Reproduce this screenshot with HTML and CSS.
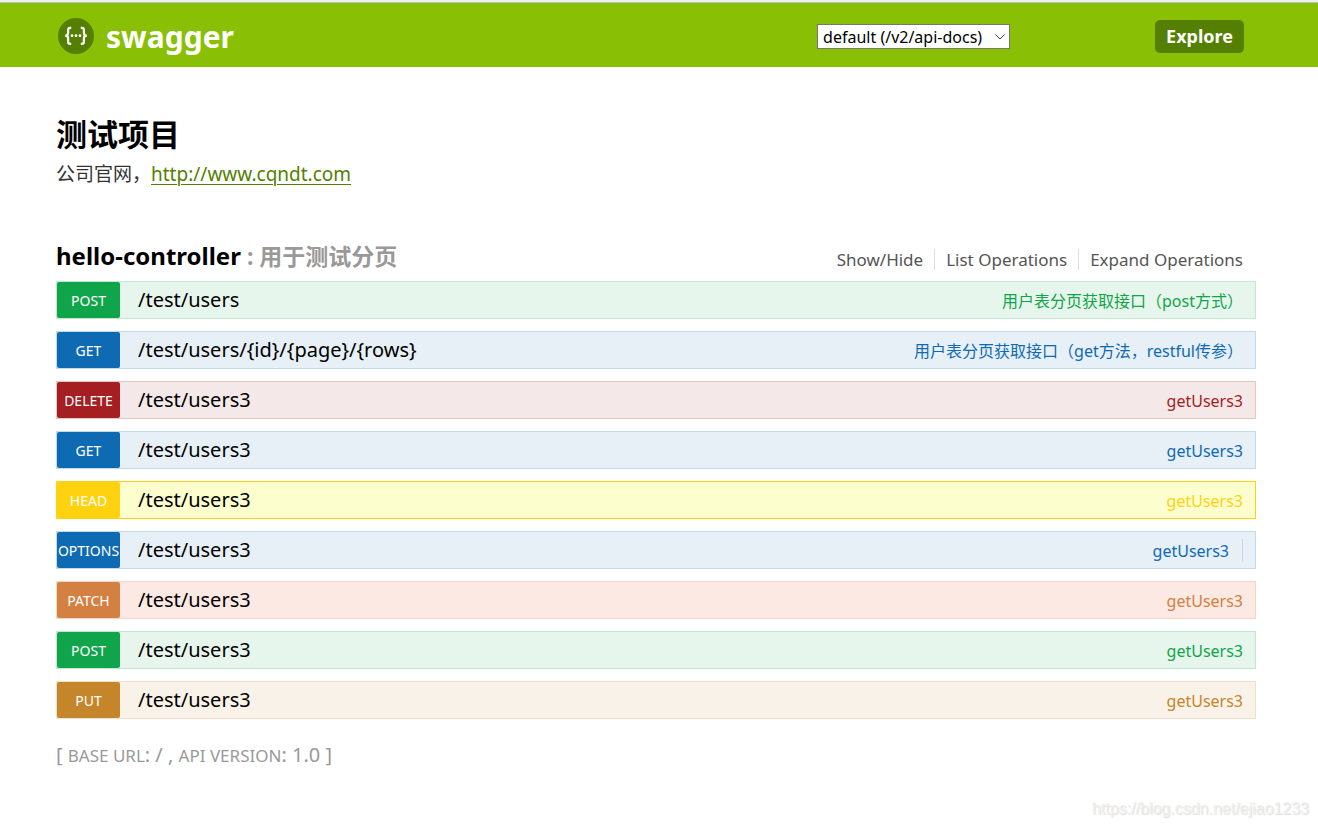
FILE: index.html
```html
<!DOCTYPE html>
<html lang="zh-CN">
<head>
    <meta charset="UTF-8">
    <meta name="viewport" content="width=device-width, initial-scale=1.0">
    <title>Swagger UI</title>
    <link rel="stylesheet" href="styles.css">
</head>
<body>

    <header class="header">
        <a class="logo" href="#">
            <svg class="logo-icon" viewBox="0 0 36 36" width="36" height="36" aria-hidden="true">
                <circle cx="18" cy="18" r="18" fill="#547f00"/>
                <g fill="none" stroke="#fff" stroke-width="2.2">
                    <path d="M13.2 9.8h-1q-2.1 0-2.1 2.1v3.2q0 2.6-2.9 2.6q2.9 0 2.9 2.6v3.4q0 2.1 2.1 2.1h1"/>
                    <path d="M22.8 9.8h1q2.1 0 2.1 2.1v3.2q0 2.6 2.9 2.6q-2.9 0-2.9 2.6v3.4q0 2.1-2.1 2.1h-1"/>
                </g>
                <g fill="#fff">
                    <circle cx="14" cy="17.7" r="1.4"/>
                    <circle cx="18" cy="17.7" r="1.4"/>
                    <circle cx="22" cy="17.7" r="1.4"/>
                </g>
            </svg>
            <span class="logo-title">swagger</span>
        </a>
        <form class="api-selector">
            <div class="select-box">
                <select aria-label="API docs">
                    <option>default (/v2/api-docs)</option>
                </select>
                <svg class="select-arrow" viewBox="0 0 10 6" width="10" height="6" aria-hidden="true">
                    <path d="M0.5 0.5l4.5 4.5l4.5-4.5" fill="none" stroke="#444" stroke-width="1"/>
                </svg>
            </div>
            <button class="explore" type="button">Explore</button>
        </form>
    </header>

    <main class="container">
        <section class="info">
            <h1>测试项目</h1>
            <p>公司官网，<a href="http://www.cqndt.com">http://www.cqndt.com</a></p>
        </section>

        <section class="resource">
            <div class="heading">
                <h2><a href="#">hello-controller</a> : 用于测试分页</h2>
                <ul class="options">
                    <li><a href="#">Show/Hide</a></li>
                    <li><a href="#">List Operations</a></li>
                    <li><a href="#">Expand Operations</a></li>
                </ul>
            </div>

            <ul class="operations">
                <li class="operation post">
                    <a class="method" href="#">POST</a>
                    <a class="path" href="#">/test/users</a>
                    <a class="summary" href="#">用户表分页获取接口（post方式）</a>
                </li>
                <li class="operation get">
                    <a class="method" href="#">GET</a>
                    <a class="path" href="#">/test/users/{id}/{page}/{rows}</a>
                    <a class="summary" href="#">用户表分页获取接口（get方法，restful传参）</a>
                </li>
                <li class="operation delete">
                    <a class="method" href="#">DELETE</a>
                    <a class="path" href="#">/test/users3</a>
                    <a class="summary" href="#">getUsers3</a>
                </li>
                <li class="operation get">
                    <a class="method" href="#">GET</a>
                    <a class="path" href="#">/test/users3</a>
                    <a class="summary" href="#">getUsers3</a>
                </li>
                <li class="operation head">
                    <a class="method" href="#">HEAD</a>
                    <a class="path" href="#">/test/users3</a>
                    <a class="summary" href="#">getUsers3</a>
                </li>
                <li class="operation options-method">
                    <a class="method" href="#">OPTIONS</a>
                    <a class="path" href="#">/test/users3</a>
                    <a class="summary" href="#">getUsers3</a>
                </li>
                <li class="operation patch">
                    <a class="method" href="#">PATCH</a>
                    <a class="path" href="#">/test/users3</a>
                    <a class="summary" href="#">getUsers3</a>
                </li>
                <li class="operation post">
                    <a class="method" href="#">POST</a>
                    <a class="path" href="#">/test/users3</a>
                    <a class="summary" href="#">getUsers3</a>
                </li>
                <li class="operation put">
                    <a class="method" href="#">PUT</a>
                    <a class="path" href="#">/test/users3</a>
                    <a class="summary" href="#">getUsers3</a>
                </li>
            </ul>
        </section>

        <footer class="footer">[ <span>base url</span>: / , <span>api version</span>: 1.0 ]</footer>
    </main>

    <div class="watermark">https://blog.csdn.net/ejiao1233</div>

</body>
</html>
```
FILE: styles.css
```css
* {
    margin: 0;
    padding: 0;
    box-sizing: border-box;
}

body {
    font-family: "Noto Sans", "Noto Sans CJK SC", sans-serif;
    background: #fff;
    color: #333;
    border-top: 2px solid #f0f0f0;
}

a {
    color: inherit;
    text-decoration: none;
}

ul {
    list-style: none;
}

/* Header */
.header {
    display: flex;
    align-items: center;
    justify-content: space-between;
    height: 65px;
    padding: 2px 74px 0 58px;
    background: #89bf04;
    border-top: 1px solid #b9bfc9;
}

.logo {
    display: flex;
    align-items: center;
    gap: 12px;
    color: #fff;
}

.logo-title {
    padding-top: 2px;
    font-size: 30px;
    font-weight: bold;
    line-height: 40px;
}

.api-selector {
    display: flex;
    align-items: center;
    gap: 145px;
}

.select-box {
    position: relative;
    display: flex;
}

.select-box select {
    appearance: none;
    width: 193px;
    height: 25px;
    padding: 1px 24px 0 5px;
    border: 1px solid #767676;
    background: #fff;
    color: #000;
    font-family: "Noto Sans", sans-serif;
    font-size: 16px;
}

.select-arrow {
    position: absolute;
    right: 5px;
    top: 10px;
    pointer-events: none;
}

.explore {
    height: 33px;
    padding: 0 11px;
    border: none;
    border-radius: 5px;
    background: #547f00;
    color: #fff;
    font-family: inherit;
    font-size: 18px;
    font-weight: bold;
    cursor: pointer;
}

/* Content */
.container {
    padding: 47px 62px 0 56px;
}

.info h1 {
    color: #000;
    font-size: 31px;
    line-height: 40px;
}

.info p {
    font-size: 19px;
    line-height: 40px;
}

.info a {
    color: #547f00;
    text-decoration: underline;
    text-decoration-thickness: 1px;
    text-underline-offset: 3px;
}

.resource {
    margin-top: 42px;
}

.heading {
    display: flex;
    align-items: center;
    justify-content: space-between;
    padding-bottom: 5px;
}

.heading h2 {
    color: #999;
    font-size: 23px;
    line-height: 40px;
}

.heading h2 a {
    color: #000;
    font-size: 24px;
}

.options {
    display: flex;
    color: #555;
    font-size: 17px;
    line-height: 21px;
    padding-top: 7px;
}

.options li {
    padding: 0 11px;
    border-right: 1px solid #ddd;
}

.options li:last-child {
    padding-right: 13px;
    border-right: none;
}

.operation {
    display: flex;
    align-items: center;
    height: 38px;
    margin-bottom: 12px;
    border: 1px solid;
}

.method {
    width: 63px;
    height: 36px;
    border-radius: 2px;
    color: #fff;
    font-size: 14px;
    line-height: 38px;
    text-align: center;
}

.path {
    flex: 1;
    padding-left: 18px;
    color: #000;
    font-size: 20px;
    line-height: 34px;
}

.summary {
    margin-right: 12px;
    font-size: 16px;
    line-height: 22px;
    padding-top: 1px;
}

.post { background: #e7f6ec; border-color: #c3e8d1; color: #10a54a; }
.post .method { background: #10a54a; }

.get,
.options-method { background: #e7f0f7; border-color: #c3d9ec; color: #0f6ab4; }
.get .method,
.options-method .method { background: #0f6ab4; }

.options-method .summary {
    padding-right: 13px;
    border-right: 1px solid #c3d9ec;
}

.delete { background: #f5e8e8; border-color: #e8c6c7; color: #a41e22; }
.delete .method { background: #a41e22; }

.head { background: #fcffcd; border-color: #ffd20f; color: #ffd20f; }
.head .method { background: #ffd20f; }

.patch { background: #fce9e3; border-color: #f5d5c3; color: #d38042; }
.patch .method { background: #d38042; }

.put { background: #f9f2e9; border-color: #f0e0ca; color: #c5862b; }
.put .method { background: #c5862b; }

.footer {
    margin-top: 20px;
    color: #999;
    font-size: 20px;
    line-height: 32px;
}

.footer span {
    font-size: 17px;
    text-transform: uppercase;
}

.watermark {
    position: absolute;
    right: 9px;
    bottom: 8px;
    color: #f0f0f0;
    font-family: "Liberation Sans", Arial, sans-serif;
    font-size: 16px;
    line-height: 20px;
    text-shadow: 1px 1px 1px #ddd;
}
```
